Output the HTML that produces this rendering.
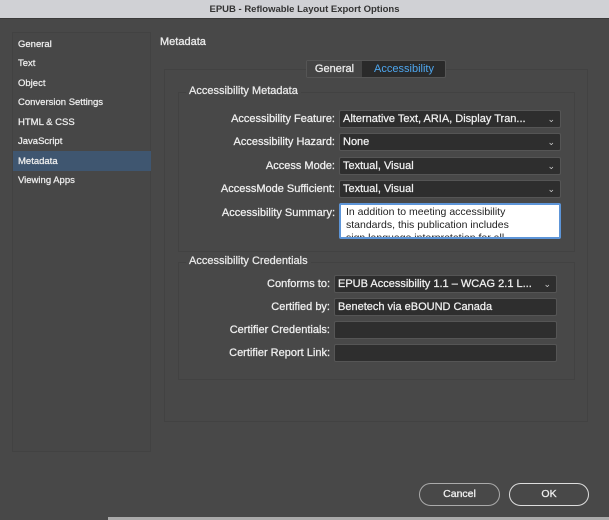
<!DOCTYPE html>
<html><head><style>
*{box-sizing:border-box;margin:0;padding:0}
body{width:609px;height:520px;background:#484848;font-family:"Liberation Sans",sans-serif;color:#e8e8e8;position:relative;overflow:hidden;font-size:10px}
.a{position:absolute}
.title{left:0;top:0;width:609px;height:19px;background:#d0d1d5;color:#333;font-weight:bold;font-size:9.5px;text-align:center;line-height:19px;border-bottom:1px solid #3a3a3a}
.left{left:12px;top:32px;width:139px;height:420px;border:1px solid #424242;background:#474747}
.left div{position:absolute;left:0;width:138px;height:20px;line-height:21px;padding-left:5px;font-size:9.5px;color:#eee;-webkit-text-stroke:0.25px #eee}
.box{border:1px solid #424242}
.lbl{font-size:11px;text-align:right;color:#f0f0f0;line-height:18px;-webkit-text-stroke:0.25px #f0f0f0}
.sel{background:#2e2e2e;border:1px solid #555;border-radius:2px;height:18px;line-height:17px;padding-left:3px;font-size:11px;color:#f0f0f0;-webkit-text-stroke:0.25px #f0f0f0;white-space:nowrap}
.sel .c{position:absolute;right:5px;top:0;font-size:9px;color:#ccc;-webkit-text-stroke:0}
.btn{border:1.5px solid #ccc;border-radius:12px;height:23px;line-height:20px;text-align:center;font-size:10.5px;color:#eee;-webkit-text-stroke:0.3px #eee}
.leg{background:#484848;padding:0 3px;font-size:11px;-webkit-text-stroke:0.25px #eee}
</style></head><body>
<div class="a title">EPUB - Reflowable Layout Export Options</div>
<div class="a left">
<div style="top:1px">General</div>
<div style="top:20px">Text</div>
<div style="top:40px">Object</div>
<div style="top:59px">Conversion Settings</div>
<div style="top:79px">HTML &amp; CSS</div>
<div style="top:98px">JavaScript</div>
<div style="top:118px;background:#3f5670">Metadata</div>
<div style="top:137px">Viewing Apps</div>
</div>
<div class="a" style="left:160px;top:36px;font-size:11px;-webkit-text-stroke:0.3px #eee">Metadata</div>
<div class="a box" style="left:164px;top:69px;width:424px;height:353px"></div>
<div class="a" style="left:306px;top:60px;width:140px;height:18px;background:#2a2a2a;border:1px solid #555;border-radius:2px"></div>
<div class="a" style="left:307px;top:61px;width:55px;height:16px;background:#444;text-align:center;line-height:16px;font-size:11px;-webkit-text-stroke:0.3px #eee">General</div>
<div class="a" style="left:363px;top:61px;width:82px;height:16px;text-align:center;line-height:16px;font-size:11px;color:#4ea6ee">Accessibility</div>

<div class="a box" style="left:178px;top:92px;width:397px;height:160px"></div>
<div class="a leg" style="left:186px;top:85px">Accessibility Metadata</div>
<div class="a lbl" style="left:180px;top:110px;width:155px">Accessibility Feature:</div>
<div class="a sel" style="left:339px;top:110px;width:222px">Alternative Text, ARIA, Display Tran...<span class="c">⌄</span></div>
<div class="a lbl" style="left:180px;top:133px;width:155px">Accessibility Hazard:</div>
<div class="a sel" style="left:339px;top:133px;width:222px">None<span class="c">⌄</span></div>
<div class="a lbl" style="left:180px;top:157px;width:155px">Access Mode:</div>
<div class="a sel" style="left:339px;top:157px;width:222px">Textual, Visual<span class="c">⌄</span></div>
<div class="a lbl" style="left:180px;top:180px;width:155px">AccessMode Sufficient:</div>
<div class="a sel" style="left:339px;top:180px;width:222px">Textual, Visual<span class="c">⌄</span></div>
<div class="a lbl" style="left:180px;top:204px;width:155px">Accessibility Summary:</div>
<div class="a" style="left:339px;top:203px;width:222px;height:36px;background:#fff;border:2px solid #5d95d8;border-radius:2px;color:#222;font-size:10.5px;line-height:13px;padding:1px 30px 0 5px;overflow:hidden">In addition to meeting accessibility standards, this publication includes sign language interpretation for all</div>

<div class="a box" style="left:178px;top:262px;width:397px;height:118px"></div>
<div class="a leg" style="left:186px;top:255px">Accessibility Credentials</div>
<div class="a lbl" style="left:180px;top:275px;width:150px">Conforms to:</div>
<div class="a sel" style="left:334px;top:275px;width:223px">EPUB Accessibility 1.1 – WCAG 2.1 L...<span class="c">⌄</span></div>
<div class="a lbl" style="left:180px;top:298px;width:150px">Certified by:</div>
<div class="a sel" style="left:334px;top:298px;width:223px">Benetech via eBOUND Canada</div>
<div class="a lbl" style="left:180px;top:321px;width:150px">Certifier Credentials:</div>
<div class="a sel" style="left:334px;top:321px;width:223px"></div>
<div class="a lbl" style="left:180px;top:344px;width:150px">Certifier Report Link:</div>
<div class="a sel" style="left:334px;top:344px;width:223px"></div>

<div class="a btn" style="left:419px;top:483px;width:81px;border-color:#aaa">Cancel</div>
<div class="a btn" style="left:509px;top:483px;width:80px;border-color:#ddd">OK</div>
<div class="a" style="left:108px;top:517px;width:501px;height:3px;background:#aaa"></div>
</body></html>
